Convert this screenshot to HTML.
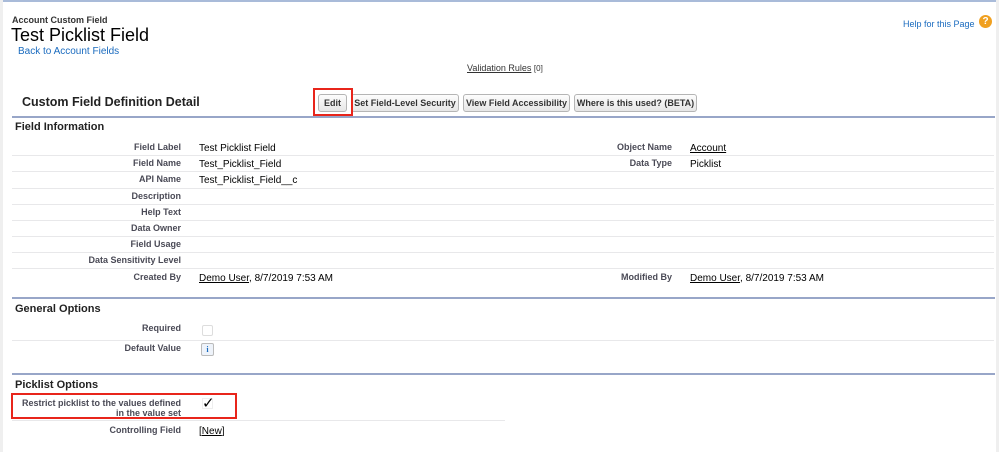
<!DOCTYPE html>
<html><head><style>
body{margin:0;width:999px;height:452px;background:#fff;position:relative;overflow:hidden;font-family:"Liberation Sans",Arial,sans-serif;color:#000}
.a{position:absolute;white-space:nowrap}
.lbl{position:absolute;right:818px;font-size:9px;font-weight:bold;color:#4a4a56;text-align:right;white-space:nowrap}
.rl{position:absolute;right:327px;font-size:9px;font-weight:bold;color:#4a4a56;white-space:nowrap}
.val{position:absolute;left:199px;font-size:10px;white-space:nowrap;margin-top:2px}
.rv{position:absolute;left:690px;font-size:10px;white-space:nowrap;margin-top:2px}
.ln{position:absolute;left:12px;right:5px;height:1px;background:#e8e8ea}
.bl{position:absolute;left:12px;right:4px;height:2px;background:#98a6c8}
.btn{position:absolute;top:94px;height:16px;border:1px solid #b5b5b5;border-radius:3px;background:linear-gradient(#fdfdfd,#e6e6e6);font-size:9px;font-weight:bold;color:#333;line-height:16px;text-align:center;white-space:nowrap;overflow:hidden}
.sec{position:absolute;left:15px;font-size:11px;font-weight:bold;color:#222}
u{text-decoration:underline}
</style></head><body>
<div class="a" style="left:0;top:0;width:999px;height:2px;background:#a9bbd9"></div>
<div class="a" style="left:0;top:0;width:3px;height:452px;background:#efefef"></div>
<div class="a" style="right:0;top:0;width:3px;height:452px;background:#efefef"></div>
<div class="a" style="left:12px;top:15px;font-size:9px;font-weight:bold;color:#333">Account Custom Field</div>
<div class="a" style="left:11px;top:25px;font-size:18px;color:#000">Test Picklist Field</div>
<div class="a" style="left:18px;top:46px;font-size:10px;color:#1a6bbf">Back to Account Fields</div>
<div class="a" style="left:903px;top:19px;font-size:9px;color:#1a6bbf">Help for this Page</div>
<div class="a" style="left:979px;top:15px;width:13px;height:13px;border-radius:50%;background:#f0a020;color:#fff;font-size:10px;font-weight:bold;text-align:center;line-height:13px">?</div>
<div class="a" style="left:467px;top:63px;font-size:9px;color:#333"><u>Validation Rules</u> <span style="font-size:8px">[0]</span></div>
<div class="a" style="left:22px;top:95px;font-size:12.5px;font-weight:bold;color:#222">Custom Field Definition Detail</div>
<div class="btn" style="left:318px;width:27px">Edit</div>
<div class="btn" style="left:351px;width:106px">Set Field-Level Security</div>
<div class="btn" style="left:463px;width:105px">View Field Accessibility</div>
<div class="btn" style="left:574px;width:121px">Where is this used? (BETA)</div>
<div class="a" style="left:313px;top:88px;width:36px;height:24px;border:2px solid #e8251b"></div>
<div class="bl" style="top:116px"></div>
<div class="sec" style="top:121px">Field Information</div>

<div class="lbl" style="top:142px">Field Label</div><div class="val" style="top:141px">Test Picklist Field</div>
<div class="rl" style="top:142px">Object Name</div><div class="rv" style="top:141px"><u>Account</u></div>
<div class="ln" style="top:155px"></div>
<div class="lbl" style="top:158px">Field Name</div><div class="val" style="top:157px">Test_Picklist_Field</div>
<div class="rl" style="top:158px">Data Type</div><div class="rv" style="top:157px">Picklist</div>
<div class="ln" style="top:171px"></div>
<div class="lbl" style="top:174px">API Name</div><div class="val" style="top:173px">Test_Picklist_Field__c</div>
<div class="ln" style="top:188px"></div>
<div class="lbl" style="top:191px">Description</div>
<div class="ln" style="top:204px"></div>
<div class="lbl" style="top:207px">Help Text</div>
<div class="ln" style="top:220px"></div>
<div class="lbl" style="top:223px">Data Owner</div>
<div class="ln" style="top:236px"></div>
<div class="lbl" style="top:239px">Field Usage</div>
<div class="ln" style="top:252px"></div>
<div class="lbl" style="top:255px">Data Sensitivity Level</div>
<div class="ln" style="top:268px"></div>
<div class="lbl" style="top:272px">Created By</div><div class="val" style="top:271px"><u>Demo User</u>, 8/7/2019 7:53 AM</div>
<div class="rl" style="top:272px">Modified By</div><div class="rv" style="top:271px"><u>Demo User</u>, 8/7/2019 7:53 AM</div>

<div class="bl" style="top:297px"></div>
<div class="sec" style="top:303px">General Options</div>
<div class="lbl" style="top:323px">Required</div>
<div class="a" style="left:202px;top:325px;width:9px;height:9px;border:1px solid #ddd;border-radius:2px"></div>
<div class="ln" style="top:340px"></div>
<div class="lbl" style="top:343px">Default Value</div>
<div class="a" style="left:201px;top:343px;width:11px;height:11px;border:1px solid #bbb;border-radius:2px;background:#eef3fa;color:#1a6bbf;font-size:8px;font-weight:bold;text-align:center;line-height:11px;font-family:'Liberation Serif',serif">i</div>
<div class="bl" style="top:373px"></div>
<div class="sec" style="top:379px">Picklist Options</div>
<div class="lbl" style="top:398px;line-height:10px">Restrict picklist to the values defined<br>in the value set</div>
<div class="a" style="left:202px;top:398px;width:9px;height:9px;border:1px solid #eee"></div>
<div class="a" style="left:202px;top:394px;font-size:15px;font-weight:bold;font-family:'DejaVu Sans',sans-serif">✓</div>
<div class="a" style="left:11px;top:393px;width:222px;height:22px;border:2px solid #e8251b"></div>
<div class="a" style="left:12px;top:420px;width:493px;height:1px;background:#e8e8ea"></div>
<div class="lbl" style="top:425px">Controlling Field</div>
<div class="val" style="top:424px;font-size:10px">[<u>New</u>]</div>
</body></html>
